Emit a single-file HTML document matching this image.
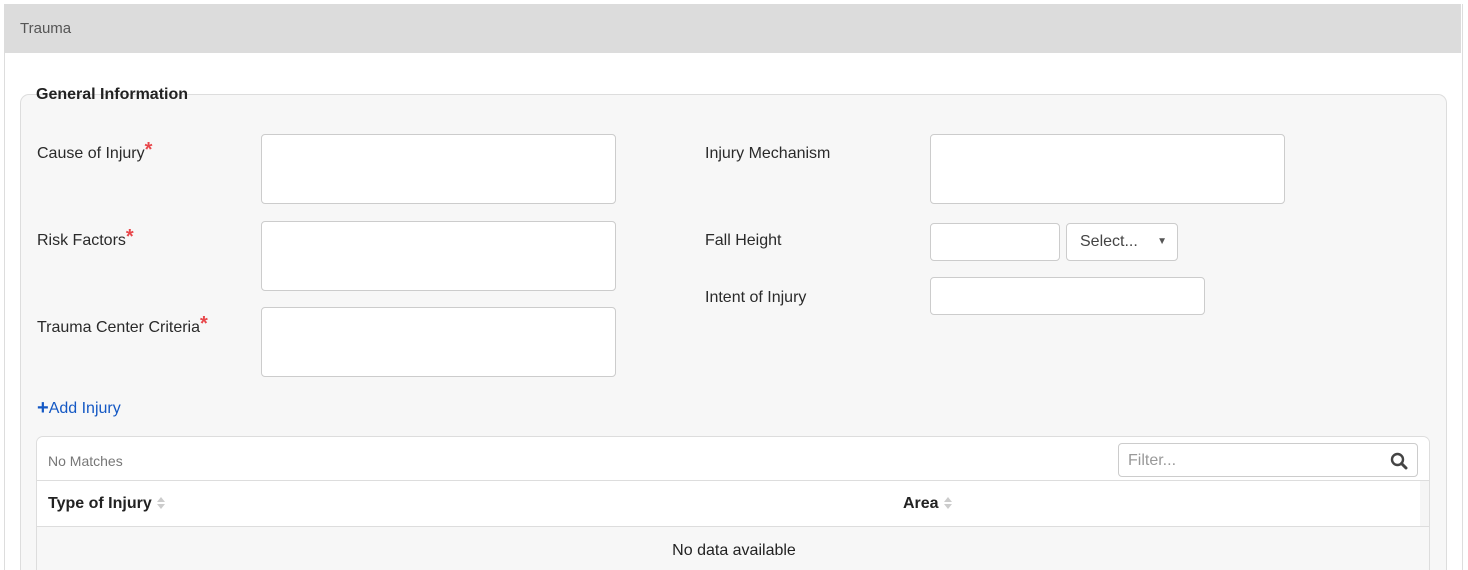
<!DOCTYPE html>
<html style="height:570px;overflow:hidden"><head><style>
*{box-sizing:border-box;margin:0;padding:0}
body{width:1468px;height:570px;background:#fff;font-family:"Liberation Sans",sans-serif;color:#222;position:relative;overflow:hidden}
.a{position:absolute}
.lbl{position:absolute;font-size:16px;color:#2a2a2a;line-height:20px}
.lbl b{color:#e8474b;font-weight:bold;font-size:20px;position:relative;top:-2px;line-height:10px}
.in{position:absolute;background:#fff;border:1px solid #ccc;border-radius:4px}
.srt{display:inline-block;position:relative;width:10px;height:14px;vertical-align:middle;top:-1px}
</style></head><body>
<div class="a" style="left:4px;top:4px;width:1459px;height:566px;border:1px solid #ddd;border-top:none;border-bottom:none"></div>
<div class="a" style="left:4px;top:4px;width:1457px;height:49px;background:#dcdcdc"></div>
<div class="a" style="left:20px;top:20px;font-size:15px;color:#555;line-height:18px">Trauma</div>

<div class="a" style="left:20px;top:94px;width:1427px;height:476px;background:#f7f7f7;border:1px solid #ddd;border-bottom:none;border-radius:9px 9px 0 0"></div>
<div class="a" style="left:30px;top:83px;padding:0 6px;background:#fff;font-size:16px;font-weight:bold;color:#222;line-height:22px;height:11px;overflow:visible"><span style="position:relative;top:1px">General Information</span></div>

<div class="lbl" style="left:37px;top:144px">Cause of Injury<b>*</b></div>
<div class="in" style="left:261px;top:134px;width:355px;height:70px"></div>
<div class="lbl" style="left:37px;top:231px">Risk Factors<b>*</b></div>
<div class="in" style="left:261px;top:221px;width:355px;height:70px"></div>
<div class="lbl" style="left:37px;top:318px">Trauma Center Criteria<b>*</b></div>
<div class="in" style="left:261px;top:307px;width:355px;height:70px"></div>

<div class="lbl" style="left:705px;top:144px">Injury Mechanism</div>
<div class="in" style="left:930px;top:134px;width:355px;height:70px"></div>
<div class="lbl" style="left:705px;top:231px">Fall Height</div>
<div class="in" style="left:930px;top:223px;width:130px;height:38px"></div>
<div class="in" style="left:1066px;top:223px;width:112px;height:38px;font-size:16px;color:#444;padding:9px 0 0 13px">Select...<span style="position:absolute;right:10px;top:12px;font-size:10px;color:#555">▼</span></div>
<div class="lbl" style="left:705px;top:288px">Intent of Injury</div>
<div class="in" style="left:930px;top:277px;width:275px;height:38px"></div>

<div class="a" style="left:37px;top:397px;font-size:16px;color:#1458c4;line-height:20px"><span style="font-weight:bold;font-size:20px;position:relative;top:1px">+</span>Add Injury</div>

<div class="a" style="left:36px;top:436px;width:1394px;height:134px;border:1px solid #ddd;border-bottom:none;border-radius:7px 7px 0 0;background:#f7f7f7;overflow:hidden">
 <div class="a" style="left:0;top:0;width:1394px;height:44px;background:#fff;border-bottom:1px solid #ddd"></div>
 <div class="a" style="left:11px;top:16px;font-size:14px;color:#777">No Matches</div>
 <div class="in" style="left:1081px;top:6px;width:300px;height:34px;font-size:16px;color:#999;padding:8px 0 0 9px">Filter...
  <svg style="position:absolute;right:9px;top:8px" width="18" height="18" viewBox="0 0 18 18"><circle cx="7.5" cy="7.5" r="5.5" fill="none" stroke="#444" stroke-width="2.4"/><line x1="11.5" y1="11.5" x2="16" y2="16" stroke="#444" stroke-width="3" stroke-linecap="round"/></svg></div>
 <div class="a" style="left:0;top:44px;width:1383px;height:46px;background:#fff;border-bottom:1px solid #ddd"></div>
 <div class="a" style="left:1383px;top:44px;width:11px;height:46px;background:#f5f5f5;border-bottom:1px solid #ddd"></div>
 <div class="a" style="left:11px;top:58px;font-size:16px;font-weight:bold;color:#222">Type of Injury <svg class="srt" viewBox="0 0 10 14"><path d="M1 6L5 1L9 6Z M1 8L5 13L9 8Z" fill="#ccc"/></svg></div>
 <div class="a" style="left:866px;top:58px;font-size:16px;font-weight:bold;color:#222">Area <svg class="srt" viewBox="0 0 10 14"><path d="M1 6L5 1L9 6Z M1 8L5 13L9 8Z" fill="#ccc"/></svg></div>
 <div class="a" style="left:0;top:105px;width:1394px;text-align:center;font-size:16px;color:#222;line-height:18px">No data available</div>
</div>
</body></html>
